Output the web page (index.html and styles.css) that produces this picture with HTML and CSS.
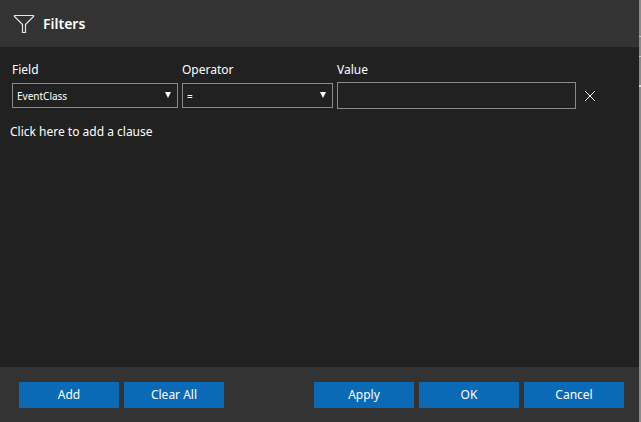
FILE: index.html
```html
<!DOCTYPE html>
<html lang="en">
<head>
    <meta charset="UTF-8">
    <meta name="viewport" content="width=device-width, initial-scale=1.0">
    <title>Filters</title>
    <link rel="stylesheet" href="styles.css">
</head>
<body>
    <div class="dialog">
        <header class="dialog-header">
            <svg class="filter-icon" width="22" height="20" viewBox="0 0 22 20" aria-hidden="true">
                <path d="M1.5 1.5H20.5V2.5L12.5 10.5V18.5H9.5V10.5L1.5 2.5Z" fill="none" stroke="#e8e8e8" stroke-width="1.2"/>
            </svg>
            <h1>Filters</h1>
        </header>

        <form class="dialog-form">
            <div class="clauses">
                <div class="clause">
                    <label for="field">Field</label>
                    <label for="operator">Operator</label>
                    <label for="value">Value</label>
                    <span></span>

                    <div class="select-box">
                        <select id="field">
                            <option>EventClass</option>
                        </select>
                    </div>
                    <div class="select-box">
                        <select id="operator">
                            <option>=</option>
                        </select>
                    </div>
                    <input type="text" id="value" class="value-input">
                    <button type="button" class="btn-remove" aria-label="Remove clause">
                        <svg width="10" height="10" viewBox="0 0 10 10" aria-hidden="true">
                            <path d="M0 0L10 10M10 0L0 10" stroke="#fff" stroke-width="1"/>
                        </svg>
                    </button>
                </div>
                <button type="button" class="btn-add-clause">Click here to add a clause</button>
            </div>

            <footer class="dialog-footer">
                <button type="button" class="btn">Add</button>
                <button type="button" class="btn">Clear All</button>
                <button type="button" class="btn btn-apply">Apply</button>
                <button type="button" class="btn">OK</button>
                <button type="button" class="btn">Cancel</button>
            </footer>
        </form>
    </div>
    <!-- page behind the dialog -->
    <div class="backdrop"></div>
</body>
</html>
```

FILE: styles.css
```css
* {
    box-sizing: border-box;
}

body {
    display: flex;
    min-height: 100vh;
    margin: 0;
    background-color: #212121;
    color: #fff;
    font-family: "Noto Sans", "Open Sans", sans-serif;
    font-size: 12px;
    line-height: 18px;
}

button,
select,
input {
    color: inherit;
    font: inherit;
}

button {
    border: none;
    cursor: pointer;
}

.dialog {
    flex: 1;
    display: flex;
    flex-direction: column;
}

.backdrop {
    width: 2px;
    background: linear-gradient(#c4c4c4, #c4c4c4) 0 36px / 2px 1px no-repeat,
        linear-gradient(#c4c4c4, #c4c4c4) 0 56px / 2px 1px no-repeat,
        linear-gradient(#d8d8d8, #d8d8d8) 0 85px / 2px 2px no-repeat,
        #8a8a8a;
}

.dialog-header {
    display: flex;
    align-items: center;
    gap: 8px;
    height: 47px;
    padding-left: 13px;
    background-color: #333;
}

h1 {
    margin: 0;
    font-size: 14px;
    font-weight: 600;
}

.dialog-form {
    flex: 1;
    display: flex;
    flex-direction: column;
}

.clauses {
    flex: 1;
    padding: 14px 43px 14px 10px;
}

.clause {
    display: grid;
    grid-template-columns: 166fr 151fr 239fr 16px;
    column-gap: 4px;
    row-gap: 3px;
    align-items: center;
    margin-left: 2px;
}

.select-box {
    position: relative;
}

.select-box::after {
    content: "";
    position: absolute;
    top: 9px;
    right: 7px;
    width: 6px;
    height: 6px;
    background-color: #fff;
    clip-path: polygon(0 0, 100% 0, 50% 100%);
    pointer-events: none;
}

.select-box select {
    display: block;
    width: 100%;
    height: 25px;
    padding: 0 4px;
    border: 1px solid #8a8a8a;
    border-radius: 0;
    background-color: #212121;
    font-size: 10px;
    appearance: none;
}

.value-input {
    width: 100%;
    height: 27px;
    padding: 0 4px;
    border: 1px solid #8a8a8a;
    background-color: #212121;
}

.btn-remove {
    display: flex;
    justify-content: center;
    padding: 0 0 0 4px;
    background: none;
}

.btn-add-clause {
    margin-top: 14px;
    padding: 0;
    background: none;
}

.dialog-footer {
    display: flex;
    gap: 5px;
    padding: 15px 15px 14px 19px;
    background-color: #333;
}

.btn {
    width: 100px;
    height: 26px;
    padding: 0;
    background-color: #0a6ab6;
}

.btn-apply {
    margin-left: auto;
}
```
